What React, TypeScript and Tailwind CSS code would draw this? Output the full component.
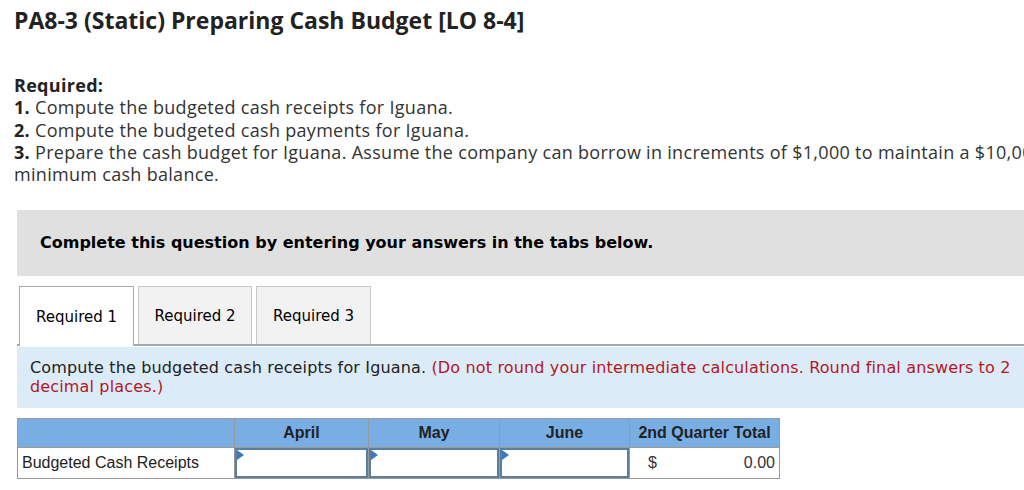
import React from 'react';

const sans = "font-['Open_Sans','Noto_Sans',sans-serif]";
const verdana = "font-['DejaVu_Sans',Verdana,sans-serif]";
const arial = "font-['Liberation_Sans',Arial,sans-serif]";

function InputCell() {
  return (
    <td className="relative border border-[#9a9a9a] p-0">
      <div className="relative h-[30px] border-2 border-[#5b7e9e] bg-white">
        <span className="absolute left-0 top-0 h-0 w-0 border-y-[5px] border-l-[7px] border-y-transparent border-l-[#3a7ac0]" />
      </div>
    </td>
  );
}

export default function App() {
  return (
    <div className="h-[490px] w-[1024px] overflow-hidden bg-white text-[#333]">
      <h1 className={`${sans} px-[14px] pt-[5px] text-[23px] font-bold leading-[30px] text-[#222]`}>
        PA8-3 (Static) Preparing Cash Budget [LO 8-4]
      </h1>

      <div className={`${sans} mt-[39px] whitespace-nowrap px-[14px] text-[18px] leading-[22.3px] tracking-[0.3px] text-[#333]`}>
        <p className="font-bold text-[#222]">Required:</p>
        <p><b className="text-[#222]">1.</b> Compute the budgeted cash receipts for Iguana.</p>
        <p><b className="text-[#222]">2.</b> Compute the budgeted cash payments for Iguana.</p>
        <p><b className="text-[#222]">3.</b> Prepare the cash budget for Iguana. Assume the company can borrow in increments of $1,000 to maintain a $10,000</p>
        <p>minimum cash balance.</p>
      </div>

      <div className="ml-[17px] mt-[25px] flex h-[66px] w-[1100px] items-center bg-[#e0e0e0] pl-[23px]">
        <p className={`${verdana} text-[16px] font-bold text-black`}>
          Complete this question by entering your answers in the tabs below.
        </p>
      </div>

      <div className="ml-[17px] mt-[10px]">
        <div className={`${verdana} flex gap-[4px] border-b-2 border-[#a9a9a9] pl-[2px] text-[15px] text-black`}>
          <div className="-mb-[2px] flex h-[60px] w-[115px] items-center justify-center border border-b-0 border-[#a9a9a9] bg-white">
            Required 1
          </div>
          <div className="flex h-[58px] w-[114px] items-center justify-center border border-b-0 border-[#c8c8c8] bg-[#f2f2f2]">
            Required 2
          </div>
          <div className="flex h-[58px] w-[115px] items-center justify-center border border-b-0 border-[#c8c8c8] bg-[#f2f2f2]">
            Required 3
          </div>
        </div>

        <div className={`${verdana} mt-[1px] h-[61px] bg-[#dcebf8] px-[13px] pt-[11px] text-[16px] leading-[19px] tracking-[0.15px] text-[#222]`}>
          Compute the budgeted cash receipts for Iguana.{' '}
          <span className="text-[#b3181f]">
            (Do not round your intermediate calculations. Round final answers to 2 decimal places.)
          </span>
        </div>

        <table className={`${arial} mt-[10px] border-collapse text-[16px]`}>
          <thead>
            <tr className="h-[29px] bg-[#78aee4] text-[#222]">
              <th className="w-[217px] border border-[#9a9a9a]" />
              <th className="w-[134px] border border-[#9a9a9a] font-bold">April</th>
              <th className="w-[131px] border border-[#9a9a9a] font-bold">May</th>
              <th className="w-[130px] border border-[#9a9a9a] font-bold">June</th>
              <th className="w-[150px] border border-[#9a9a9a] font-bold">2nd Quarter Total</th>
            </tr>
          </thead>
          <tbody>
            <tr className="h-[30px]">
              <td className="border border-[#9a9a9a] pl-[4px] text-[#222]">Budgeted Cash Receipts</td>
              <InputCell />
              <InputCell />
              <InputCell />
              <td className="border border-[#9a9a9a] px-[4px] text-[#333]">
                <div className="flex justify-between pl-[14px]">
                  <span>$</span>
                  <span>0.00</span>
                </div>
              </td>
            </tr>
          </tbody>
        </table>
      </div>
    </div>
  );
}
